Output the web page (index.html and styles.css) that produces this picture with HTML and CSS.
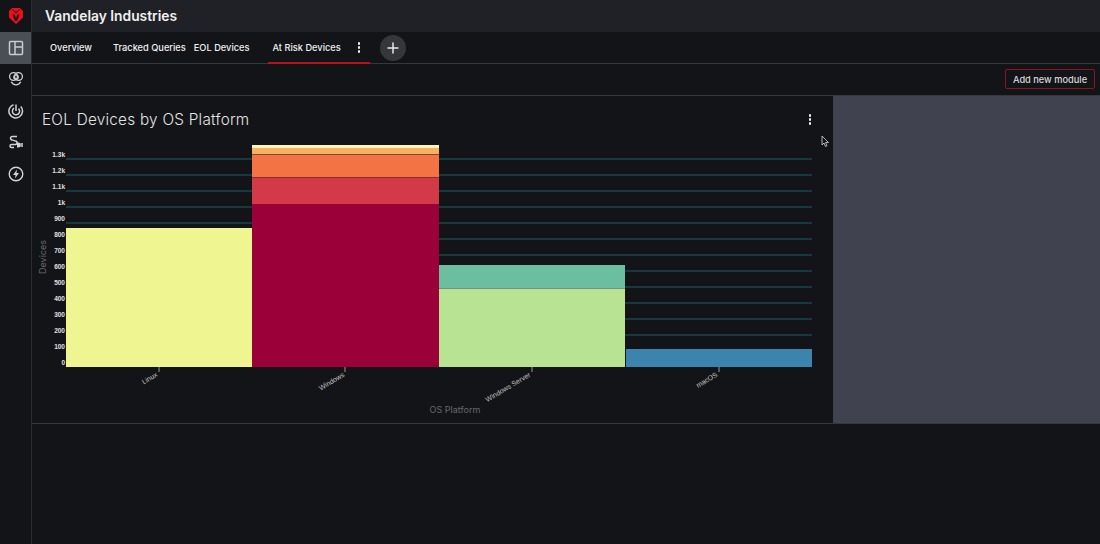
FILE: index.html
```html
<!DOCTYPE html>
<html lang="en">
<head>
<meta charset="utf-8">
<title>Vandelay Industries</title>
<link rel="stylesheet" href="styles.css">
</head>
<body>
<div class="app">
  <nav class="rail">
    <div class="logo">
      <svg width="14" height="16" viewBox="0 0 14 16"><path fill="#ee0f1b" d="M3 0H11L14 3V9.500L7 16 0 9.500V3Z"/><path fill="#16171b" d="M3.500 1 7 4 10.500 1 11 1.500 7 5.500 3 1.500ZM3.500 6.500H5.700L7 10.500 8.300 6.500H10.500L8 13H6Z"/></svg>
    </div>
    <a class="rail-item active">
      <svg width="16" height="16" viewBox="0 0 16 16" fill="none" stroke="#c8ccd0" stroke-width="1.500"><rect x="1.500" y="1.500" width="13" height="13" rx="1"/><path d="M7 1.500v13M7 7h7.500"/></svg>
    </a>
    <a class="rail-item">
      <svg width="16" height="16" viewBox="0 0 16 16" fill="none" stroke="#d0d2d4" stroke-width="1.300"><circle cx="5.500" cy="5.500" r="3.900"/><circle cx="10.500" cy="5.500" r="3.900"/><circle cx="8" cy="6" r="2.200"/><path d="M3.300 10.800a5.200 5.200 0 0 0 9.400 0"/></svg>
    </a>
    <a class="rail-item">
      <svg width="16" height="16" viewBox="0 0 16 16" fill="none" stroke="#d0d2d4" stroke-width="1.500"><path d="M5.500 1.700a6.800 6.800 0 1 0 7.300 1.900"/><path d="M6 5.200a3.600 3.600 0 1 0 4.500.4"/><path d="M8 1.500V8"/></svg>
    </a>
    <a class="rail-item">
      <svg width="16" height="16" viewBox="0 0 16 16" fill="none" stroke="#d0d2d4" stroke-width="1.500"><path d="M9 2.500H4.500a1.700 1.700 0 0 0-.5 3.400l3.600 1.200a1.700 1.700 0 0 1-.6 3.400H3.500a1.500 1.500 0 0 0 0 3H6"/><path fill="#d0d2d4" stroke="none" d="M9 8.500h1.500a2.200 2.200 0 0 1 2.200 2.200v.6a2.200 2.200 0 0 1-2.200 2.200H9Z"/><path d="M12.500 10h2.500M12.500 12h2.500"/></svg>
    </a>
    <a class="rail-item">
      <svg width="16" height="16" viewBox="0 0 16 16" fill="none" stroke="#d0d2d4" stroke-width="1.400"><circle cx="8" cy="8" r="6.800"/><path fill="#d0d2d4" stroke="none" d="M9 3.500 5 9h2.500L7 12.500 11 7H8.500Z"/></svg>
    </a>
  </nav>
  <main class="main">
    <header class="title-bar"><h1 class="title">Vandelay Industries</h1></header>
    <div class="tabs">
      <a class="tab tab-overview">Overview</a>
      <a class="tab tab-queries">Tracked Queries</a>
      <a class="tab tab-eol">EOL Devices</a>
      <a class="tab tab-risk">At Risk Devices<span class="kebab"><i></i><i></i><i></i></span></a>
      <button class="add-tab" type="button">
        <svg width="12" height="12" viewBox="0 0 12 12" stroke="#e8e8e8" stroke-width="1.500"><path d="M6 .5v11M.5 6h11"/></svg>
      </button>
    </div>
    <div class="toolbar"><button class="add-module" type="button">Add new module</button></div>
    <section class="row">
      <article class="module">
        <div class="module-head">
          <h2 class="module-title">EOL Devices by OS Platform</h2>
          <span class="kebab"><i></i><i></i><i></i></span>
        </div>
        <svg class="chart" width="802" height="328" viewBox="32 96 802 328">
          <g class="grid">
            <path d="M66 159H812M66 175H812M66 191H812M66 207H812M66 223H812M66 239H812M66 255H812M66 271H812M66 287H812M66 303H812M66 319H812M66 335H812"/>
          </g>
          <g class="ylabels" text-anchor="end">
            <text x="65" y="157">1.3k</text><text x="65" y="173">1.2k</text><text x="65" y="189">1.1k</text><text x="65" y="205">1k</text>
            <text x="65" y="221">900</text><text x="65" y="237">800</text><text x="65" y="253">700</text><text x="65" y="269">600</text>
            <text x="65" y="285">500</text><text x="65" y="301">400</text><text x="65" y="317">300</text><text x="65" y="333">200</text>
            <text x="65" y="349">100</text><text x="65" y="365">0</text>
          </g>
          <rect x="66" y="228" width="186" height="139" fill="#eef591"/>
          <rect x="252" y="145" width="187" height="3" fill="#fbf6b8"/>
          <rect x="252" y="148" width="187" height="6" fill="#f6b164"/>
          <rect x="252" y="154" width="187" height="1" fill="#7d4a2c"/>
          <rect x="252" y="155" width="187" height="22" fill="#f47345"/>
          <rect x="252" y="177" width="187" height="1" fill="#7c3231"/>
          <rect x="252" y="178" width="187" height="26" fill="#d13a46"/>
          <rect x="252" y="204" width="187" height="163" fill="#9b0038"/>
          <rect x="439" y="265" width="186" height="23" fill="#6bbe9f"/>
          <rect x="439" y="288" width="186" height="1" fill="#7f8a80"/>
          <rect x="439" y="289" width="186" height="78" fill="#b8e393"/>
          <rect x="626" y="349" width="186" height="18" fill="#3b84ad"/>
          <path class="tick" d="M159 367v5M345 367v5M532 367v5M719 367v5"/>
          <g class="xlabels" text-anchor="end">
            <text transform="translate(158 376) rotate(-31)">Linux</text>
            <text transform="translate(345 376) rotate(-31)">Windows</text>
            <text transform="translate(531 376) rotate(-31)">Windows Server</text>
            <text transform="translate(718 376) rotate(-31)">macOS</text>
          </g>
          <text class="axis-title" transform="translate(46 257) rotate(-90)" text-anchor="middle">Devices</text>
          <text class="axis-title" x="455" y="413" text-anchor="middle">OS Platform</text>
          <path class="cursor" d="M822 136v9l2-2 1.500 3.500 1.500-.7-1.500-3.300h3z"/>
        </svg>
      </article>
      <aside class="drop-zone"></aside>
    </section>
  </main>
</div>
</body>
</html>
```

FILE: styles.css
```css
* { box-sizing: border-box; }
html, body { margin: 0; height: 100%; }
body {
  background: #131418;
  color: #eee;
  font-family: Inter, "Liberation Sans", sans-serif;
  overflow: hidden;
}
.app { display: flex; height: 544px; }
.rail {
  width: 32px;
  flex: none;
  display: flex;
  flex-direction: column;
  background: #131418;
  border-right: 1px solid #2a2b30;
}
.logo { height: 32px; display: flex; align-items: center; justify-content: center; }
.rail-item { height: 31.500px; display: flex; align-items: center; justify-content: center; }
.rail-item.active { background: #4a4e55; }
.main { flex: 1; min-width: 0; display: flex; flex-direction: column; }
.title-bar {
  height: 32px;
  background: #202126;
  display: flex;
  align-items: center;
  padding: 0 0 1px 13px;
}
.title { margin: 0; font-size: 13.800px; font-weight: 600; color: #f0f0f0; }
.tabs {
  height: 32px;
  display: flex;
  align-items: center;
  border-bottom: 1px solid #36373b;
  background: #131418;
}
.tab { font-size: 9.250px; font-weight: 500; color: #f0f0f0; white-space: nowrap; }
.tab-overview { margin-left: 18px; }
.tab-queries { margin-left: 21px; }
.tab-eol { margin-left: 8px; }
.tab-risk {
  margin-left: 19px;
  width: 102px;
  height: 32px;
  padding: 2px 0 0 4px;
  display: flex;
  align-items: center;
  border-bottom: 2px solid #b5121b;
}
.kebab { display: flex; flex-direction: column; gap: 1.500px; align-items: center; }
.kebab i { width: 2.500px; height: 2.500px; border-radius: 50%; background: #f2f2f2; display: block; }
.tab-risk .kebab { margin-left: auto; margin-right: 10px; }
.add-tab {
  width: 26px;
  height: 26px;
  margin-left: 10px;
  padding: 0;
  border: 0;
  border-radius: 50%;
  background: #36373b;
  display: flex;
  align-items: center;
  justify-content: center;
}
.toolbar {
  height: 32px;
  display: flex;
  align-items: center;
  justify-content: flex-end;
  padding: 0 5px 1px 0;
  background: #131418;
  border-bottom: 1px solid #36373b;
}
.add-module {
  width: 90px;
  height: 20px;
  padding: 0;
  background: transparent;
  border: 1px solid #8a1420;
  border-radius: 2px;
  color: #d8d8d8;
  font: 500 9.250px Inter, "Liberation Sans", sans-serif;
}
.row {
  height: 328px;
  display: flex;
  border-bottom: 1px solid #36373b;
}
.module {
  position: relative;
  width: 801px;
  flex: none;
  background: #131418;
}
.module-head {
  height: 48px;
  padding: 14px 22px 0 10px;
  display: flex;
  justify-content: space-between;
}
.module-title { margin: 0; font-size: 15.300px; font-weight: 300; color: #e4e4e4; line-height: 20px; letter-spacing: .25px; }
.module-head .kebab { margin-top: 4px; }
.chart { position: absolute; left: 0; top: 0; pointer-events: none; }
.grid path { stroke: #1e5f60; stroke-width: 1; fill: none; }
.ylabels text { font: 700 6.500px "Liberation Sans", sans-serif; fill: #e0e0e0; }
.xlabels text { font: 400 7px "Liberation Sans", sans-serif; fill: #c4c4c4; }
.tick { stroke: #999; stroke-width: 1; fill: none; }
.axis-title { font: 400 9px Inter, "Liberation Sans", sans-serif; fill: #66686c; }
.cursor { fill: #15161a; stroke: #d5d5d5; stroke-width: .8; }
.drop-zone { flex: 1; background: #40434f; }
```
